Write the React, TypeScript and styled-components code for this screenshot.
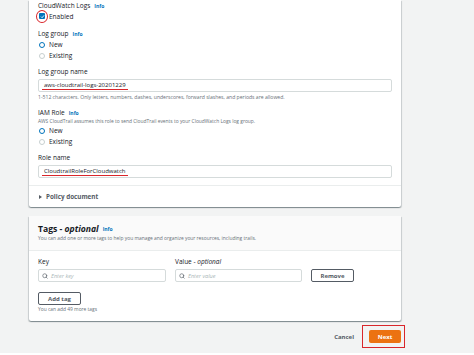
import styled, { createGlobalStyle } from "styled-components";
import { Search } from "lucide-react";

const GlobalStyle = createGlobalStyle`
  html, body {
    margin: 0;
    padding: 0;
    background: #ffffff;
  }
  body {
    font-family: "Open Sans", "Noto Sans", Arial, sans-serif;
    color: #16191f;
  }
`;

const Page = styled.div`
  background: #f2f3f3;
  height: 353px;
  padding: 0 73px 0 29px;
  overflow: hidden;
`;

const Card = styled.section<{ $gap?: number }>`
  background: #ffffff;
  margin-top: ${(p) => p.$gap ?? 0}px;
  border-radius: 0 0 2px 2px;
  box-shadow: 0 1px 1px 0 rgba(0, 28, 36, 0.3), 1px 1px 1px 0 rgba(0, 28, 36, 0.15),
    -1px 1px 1px 0 rgba(0, 28, 36, 0.15);
`;

const CardBody = styled.div<{ $top: number; $bottom: number }>`
  padding: ${(p) => p.$top}px 9px ${(p) => p.$bottom}px 9px;
`;

const Label = styled.div<{ $mt?: number }>`
  font-size: 6.5px;
  line-height: 10px;
  margin-top: ${(p) => p.$mt ?? 0}px;
  display: flex;
  align-items: center;
  gap: 4px;
`;

const Info = styled.span`
  font-size: 5px;
  font-weight: 700;
  color: #0073bb;
`;

const Help = styled.div<{ $mt?: number; $size?: number }>`
  font-size: ${(p) => p.$size ?? 4.9}px;
  line-height: 7px;
  color: #687078;
  margin-top: ${(p) => p.$mt ?? 0}px;
  white-space: nowrap;
`;

const Option = styled.label<{ $h?: number }>`
  display: flex;
  align-items: center;
  gap: 4px;
  height: ${(p) => p.$h ?? 11}px;
  font-size: 6.5px;
  padding-left: 1px;
`;

const CheckMark = styled.span`
  width: 6px;
  height: 6px;
  border-radius: 1px;
  background: #0073bb;
  display: flex;
  align-items: center;
  justify-content: center;
`;

const CircleMark = styled.span`
  position: relative;
  display: flex;
  align-items: center;
  justify-content: center;
  &::after {
    content: "";
    position: absolute;
    box-sizing: border-box;
    left: -3px;
    top: -3.5px;
    width: 12px;
    height: 13px;
    border: 1.2px solid #d9262b;
    border-radius: 50%;
  }
`;

const Radio = styled.span<{ $on?: boolean }>`
  box-sizing: border-box;
  width: 6px;
  height: 6px;
  border-radius: 50%;
  background: #ffffff;
  border: ${(p) => (p.$on ? "1.8px solid #0073bb" : "0.8px solid #c6cfd0")};
`;

const Input = styled.div<{ $mt?: number }>`
  box-sizing: border-box;
  height: 13px;
  margin-top: ${(p) => p.$mt ?? 0}px;
  border: 1px solid #d5dbdb;
  border-radius: 2px;
  display: flex;
  align-items: center;
  padding-left: 3px;
  font-size: 6px;
  color: #16191f;
`;

const Marked = styled.span`
  padding: 0 2px 0 2px;
  line-height: 7px;
  border-bottom: 1px solid #d9262b;
`;

const Divider = styled.div`
  border-top: 1px solid #eaeded;
  margin-top: 7px;
`;

const Expand = styled.div`
  height: 21px;
  padding-left: 10px;
  display: flex;
  align-items: center;
  gap: 4px;
  font-size: 6.3px;
  font-weight: 700;
  color: #545b64;
`;

const Caret = styled.span`
  width: 0;
  height: 0;
  border-top: 2.5px solid transparent;
  border-bottom: 2.5px solid transparent;
  border-left: 3.5px solid #545b64;
`;

const CardHeader = styled.div`
  background: #fafafa;
  border-bottom: 1px solid #eaeded;
  padding: 8px 9px 8px 9px;
`;

const Title = styled.div`
  font-size: 8.6px;
  font-weight: 700;
  line-height: 11px;
  display: flex;
  align-items: center;
  gap: 4px;
  em {
    font-style: italic;
  }
`;

const TagRow = styled.div`
  display: flex;
  align-items: flex-end;
  gap: 9px;
`;

const TagField = styled.div<{ $w: number }>`
  width: ${(p) => p.$w}px;
`;

const Placeholder = styled.span`
  font-style: italic;
  color: #aab7b8;
  font-size: 5.6px;
  margin-left: 3px;
`;

const Button = styled.button<{ $w: number; $mt?: number }>`
  box-sizing: border-box;
  width: ${(p) => p.$w}px;
  height: 13px;
  margin-top: ${(p) => p.$mt ?? 0}px;
  padding: 0;
  background: #ffffff;
  border: 1px solid #545b64;
  border-radius: 2px;
  font-family: inherit;
  font-size: 6px;
  font-weight: 700;
  color: #545b64;
  display: flex;
  align-items: center;
  justify-content: center;
`;

const Footer = styled.div`
  display: flex;
  justify-content: flex-end;
  align-items: center;
  margin-top: 4px;
  margin-right: -4px;
  gap: 8px;
`;

const Cancel = styled.span`
  font-size: 6px;
  font-weight: 700;
  color: #545b64;
`;

const Highlight = styled.span`
  padding: 4px 3px 4px 6px;
  border: 1.2px solid #d9262b;
  display: flex;
`;

const Primary = styled.span`
  width: 32px;
  height: 13px;
  background: #ec7211;
  border-radius: 2px;
  color: #ffffff;
  font-size: 6px;
  font-weight: 700;
  display: flex;
  align-items: center;
  justify-content: center;
`;

export default function App() {
  return (
    <>
      <GlobalStyle />
      <Page>
        <Card>
          <CardBody $top={1} $bottom={0}>
            <Label>
              CloudWatch Logs <Info>Info</Info>
            </Label>
            <Option $h={10}>
              <CircleMark>
                <CheckMark>
                  <svg width="5" height="5" viewBox="0 0 10 10">
                    <path d="M2 5.2 L4.2 7.4 L8 2.8" fill="none" stroke="#fff" strokeWidth="1.8" />
                  </svg>
                </CheckMark>
              </CircleMark>
              Enabled
            </Option>

            <Label $mt={8}>
              Log group <Info>Info</Info>
            </Label>
            <Option>
              <Radio $on /> New
            </Option>
            <Option>
              <Radio /> Existing
            </Option>

            <Label $mt={6}>Log group name</Label>
            <Input $mt={2}>
              <Marked>aws-cloudtrail-logs-20201229</Marked>
            </Input>
            <Help $mt={2} $size={5.1}>
              1-512 characters. Only letters, numbers, dashes, underscores, forward slashes, and periods are allowed.
            </Help>

            <Label $mt={7}>
              IAM Role <Info>Info</Info>
            </Label>
            <Help>AWS CloudTrail assumes this role to send CloudTrail events to your CloudWatch Logs log group.</Help>
            <Option>
              <Radio $on /> New
            </Option>
            <Option>
              <Radio /> Existing
            </Option>

            <Label $mt={6}>Role name</Label>
            <Input $mt={2}>
              <Marked>CloudtrailRoleForCloudwatch</Marked>
            </Input>
          </CardBody>
          <Divider />
          <Expand>
            <Caret />
            Policy document
          </Expand>
        </Card>

        <Card $gap={9}>
          <CardHeader>
            <Title>
              <span>
                Tags - <em>optional</em>
              </span>
              <Info>Info</Info>
            </Title>
            <Help>You can add one or more tags to help you manage and organize your resources, including trails.</Help>
          </CardHeader>
          <CardBody $top={6} $bottom={8}>
            <TagRow>
              <TagField $w={128}>
                <Label>Key</Label>
                <Input $mt={2}>
                  <Search size={6} color="#545b64" strokeWidth={2.5} />
                  <Placeholder>Enter key</Placeholder>
                </Input>
              </TagField>
              <TagField $w={127}>
                <Label>
                  <span>
                    Value - <em>optional</em>
                  </span>
                </Label>
                <Input $mt={2}>
                  <Search size={6} color="#545b64" strokeWidth={2.5} />
                  <Placeholder>Enter value</Placeholder>
                </Input>
              </TagField>
              <Button $w={43}>Remove</Button>
            </TagRow>
            <Button $w={43} $mt={10}>
              Add tag
            </Button>
            <Help $mt={1}>You can add 49 more tags</Help>
          </CardBody>
        </Card>

        <Footer>
          <Cancel>Cancel</Cancel>
          <Highlight>
            <Primary>Next</Primary>
          </Highlight>
        </Footer>
      </Page>
    </>
  );
}
